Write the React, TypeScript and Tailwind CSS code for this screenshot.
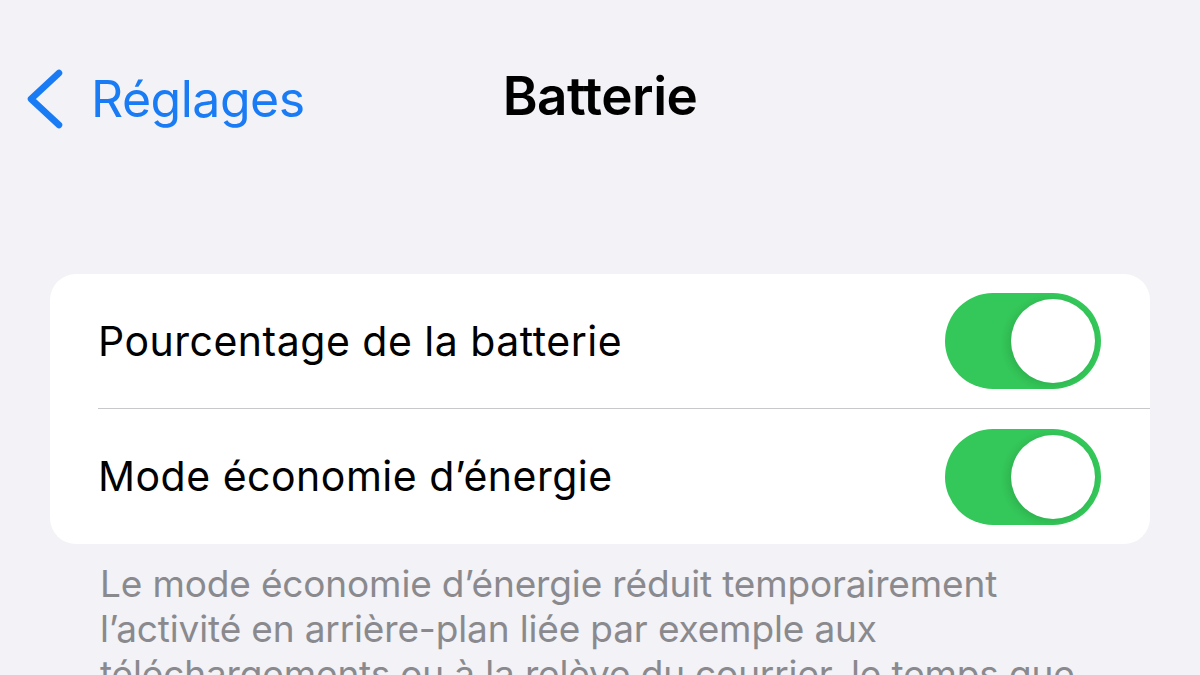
const rows = [
  { label: "Pourcentage de la batterie", on: true },
  { label: "Mode économie d’énergie", on: true },
];

const note = [
  "Le mode économie d’énergie réduit temporairement",
  "l’activité en arrière-plan liée par exemple aux",
  "téléchargements ou à la relève du courrier, le temps que",
];

function Toggle({ on }: { on: boolean }) {
  return (
    <div
      className={
        "w-[156px] h-[96px] rounded-full p-[6px] flex " +
        (on ? "bg-[#34c759] justify-end" : "bg-[#e9e9ea] justify-start")
      }
    >
      <div className="w-[84px] h-[84px] rounded-full bg-white shadow-[-3px_2px_8px_rgba(0,0,0,0.12)]" />
    </div>
  );
}

function BackChevron() {
  return (
    <svg width="40" height="62" viewBox="0 0 40 62" fill="none">
      <path
        d="M34 5 L6 31 L34 57"
        stroke="#1a7cf5"
        strokeWidth="6.5"
        strokeLinecap="round"
        strokeLinejoin="round"
      />
    </svg>
  );
}

export default function App() {
  return (
    <div
      className="w-[1200px] h-[675px] overflow-hidden bg-[#f2f2f7] text-black"
      style={{ fontFamily: "Inter, 'Noto Sans', sans-serif" }}
    >
      {/* Nav bar */}
      <div className="relative h-[196px]">
        <div className="flex items-center pt-[68px] pl-[25px] text-[#1a7cf5]">
          <BackChevron />
          <span className="text-[50px] leading-none ml-[26px] tracking-[-0.5px]">Réglages</span>
        </div>
        <div className="absolute top-[70px] left-0 right-0 text-center text-[53px] font-semibold leading-none tracking-[-0.5px]">
          Batterie
        </div>
      </div>

      {/* Settings group */}
      <div className="mx-[50px] mt-[78px] bg-white rounded-[26px]">
        {rows.map((row, i) => (
          <div key={row.label} className="flex">
            <div
              className={
                "flex-1 flex items-center justify-between ml-[48px] pr-[49px] h-[135px] " +
                (i < rows.length - 1 ? "border-b border-[#c8c8cc]" : "")
              }
            >
              <span className="text-[41px] leading-none tracking-[0.5px]">{row.label}</span>
              <Toggle on={row.on} />
            </div>
          </div>
        ))}
      </div>

      {/* Footer note */}
      <p className="ml-[100px] mt-[17px] text-[37px] leading-[45px] text-[#8a8a8e] whitespace-nowrap tracking-[-0.15px]">
        {note.map((line) => (
          <span key={line} className="block">
            {line}
          </span>
        ))}
      </p>
    </div>
  );
}
